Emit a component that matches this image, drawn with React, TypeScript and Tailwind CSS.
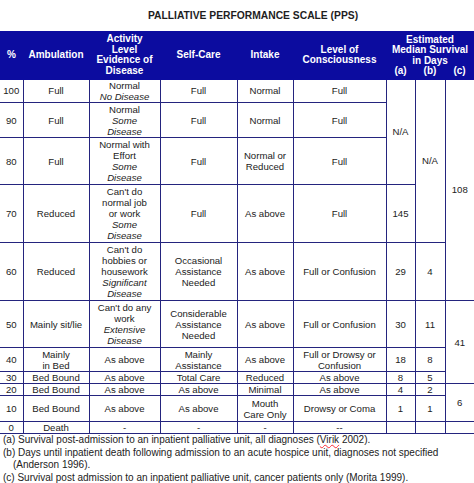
import React from 'react';

// border on right + bottom for every body cell; last column keeps no right edge
const cell = 'border-r border-b border-[#24247e] text-center align-middle p-0';
const last = 'border-b border-[#24247e] text-center align-middle p-0';

const It = ({ children }: { children: React.ReactNode }) => <i>{children}</i>;

const App: React.FC = () => {
  return (
    <div
      className="w-[474px] h-[483px] overflow-hidden bg-white text-[#222]"
      style={{ fontFamily: '"Liberation Sans", Arial, sans-serif' }}
    >
      {/* Title */}
      <div className="h-[31px] pl-[32px] pt-[9px] text-center text-[10.3px] font-bold leading-[13px] text-[#1e1e1e]">
        PALLIATIVE PERFORMANCE SCALE (PPS)
      </div>

      <table className="w-[474px] table-fixed border-collapse text-[9.6px] leading-[11px]">
        <colgroup>
          <col className="w-[23px]" />
          <col className="w-[66px]" />
          <col className="w-[71px]" />
          <col className="w-[77px]" />
          <col className="w-[56px]" />
          <col className="w-[93px]" />
          <col className="w-[29px]" />
          <col className="w-[30px]" />
          <col className="w-[29px]" />
        </colgroup>

        {/* Header */}
        <thead className="bg-[#0c0c9f] text-white font-bold text-[10px] leading-[10.5px]">
          <tr className="h-[35px]">
            <th rowSpan={2} className="p-0 font-bold">%</th>
            <th rowSpan={2} className="p-0 font-bold">Ambulation</th>
            <th rowSpan={2} className="p-0 font-bold">
              Activity<br />Level<br />Evidence of<br />Disease
            </th>
            <th rowSpan={2} className="p-0 font-bold">Self-Care</th>
            <th rowSpan={2} className="p-0 font-bold">Intake</th>
            <th rowSpan={2} className="p-0 font-bold">
              Level of<br />Consciousness
            </th>
            <th colSpan={3} className="p-0 font-bold align-bottom">
              Estimated<br />Median Survival<br />in Days
            </th>
          </tr>
          <tr className="h-[13px]">
            <th className="p-0 pb-[3px] font-bold">(a)</th>
            <th className="p-0 pb-[3px] font-bold">(b)</th>
            <th className="p-0 pb-[3px] font-bold">(c)</th>
          </tr>
        </thead>

        <tbody>
          <tr className="h-[23px]">
            <td className={cell}>100</td>
            <td className={cell}>Full</td>
            <td className={cell}>Normal<br /><It>No Disease</It></td>
            <td className={cell}>Full</td>
            <td className={cell}>Normal</td>
            <td className={cell}>Full</td>
            <td rowSpan={3} className={cell}>N/A</td>
            <td rowSpan={4} className={cell}>N/A</td>
            <td rowSpan={5} className={last}>108</td>
          </tr>
          <tr className="h-[35px]">
            <td className={cell}>90</td>
            <td className={cell}>Full</td>
            <td className={cell}>Normal<br /><It>Some<br />Disease</It></td>
            <td className={cell}>Full</td>
            <td className={cell}>Normal</td>
            <td className={cell}>Full</td>
          </tr>
          <tr className="h-[47px]">
            <td className={cell}>80</td>
            <td className={cell}>Full</td>
            <td className={cell}>Normal with<br />Effort<br /><It>Some<br />Disease</It></td>
            <td className={cell}>Full</td>
            <td className={cell}>Normal or<br />Reduced</td>
            <td className={cell}>Full</td>
          </tr>
          <tr className="h-[58px]">
            <td className={cell}>70</td>
            <td className={cell}>Reduced</td>
            <td className={cell}>Can't do<br />normal job<br />or work<br /><It>Some<br />Disease</It></td>
            <td className={cell}>Full</td>
            <td className={cell}>As above</td>
            <td className={cell}>Full</td>
            <td className={cell}>145</td>
          </tr>
          <tr className="h-[58px]">
            <td className={cell}>60</td>
            <td className={cell}>Reduced</td>
            <td className={cell}>Can't do<br />hobbies or<br />housework<br /><It>Significant<br />Disease</It></td>
            <td className={cell}>Occasional<br />Assistance<br />Needed</td>
            <td className={cell}>As above</td>
            <td className={cell}>Full or Confusion</td>
            <td className={cell}>29</td>
            <td className={cell}>4</td>
          </tr>
          <tr className="h-[47px]">
            <td className={cell}>50</td>
            <td className={cell}>Mainly sit/lie</td>
            <td className={cell}>Can't do any<br />work<br /><It>Extensive<br />Disease</It></td>
            <td className={cell}>Considerable<br />Assistance<br />Needed</td>
            <td className={cell}>As above</td>
            <td className={cell}>Full or Confusion</td>
            <td className={cell}>30</td>
            <td className={cell}>11</td>
            <td rowSpan={3} className={last}>41</td>
          </tr>
          <tr className="h-[24px]">
            <td className={cell}>40</td>
            <td className={cell}>Mainly<br />in Bed</td>
            <td className={cell}>As above</td>
            <td className={cell}>Mainly<br />Assistance</td>
            <td className={cell}>As above</td>
            <td className={cell}>Full or Drowsy or<br />Confusion</td>
            <td className={cell}>18</td>
            <td className={cell}>8</td>
          </tr>
          <tr className="h-[12px]">
            <td className={cell}>30</td>
            <td className={cell}>Bed Bound</td>
            <td className={cell}>As above</td>
            <td className={cell}>Total Care</td>
            <td className={cell}>Reduced</td>
            <td className={cell}>As above</td>
            <td className={cell}>8</td>
            <td className={cell}>5</td>
          </tr>
          <tr className="h-[12px]">
            <td className={cell}>20</td>
            <td className={cell}>Bed Bound</td>
            <td className={cell}>As above</td>
            <td className={cell}>As above</td>
            <td className={cell}>Minimal</td>
            <td className={cell}>As above</td>
            <td className={cell}>4</td>
            <td className={cell}>2</td>
            <td rowSpan={2} className={last}>6</td>
          </tr>
          <tr className="h-[26px]">
            <td className={cell}>10</td>
            <td className={cell}>Bed Bound</td>
            <td className={cell}>As above</td>
            <td className={cell}>As above</td>
            <td className={cell}>Mouth<br />Care Only</td>
            <td className={cell}>Drowsy or Coma</td>
            <td className={cell}>1</td>
            <td className={cell}>1</td>
          </tr>
          <tr className="h-[12px]">
            <td className={cell}>0</td>
            <td className={cell}>Death</td>
            <td className={cell}>-</td>
            <td className={cell}>-</td>
            <td className={cell}>-</td>
            <td className={cell}>--</td>
            <td className={cell}></td>
            <td className={cell}></td>
            <td className={last}></td>
          </tr>
        </tbody>
      </table>

      {/* Footnotes */}
      <div className="pl-[13px] text-[10px] leading-[12px] text-[#222]">
        <p className="-indent-[10px] mb-px">
          (a) Survival post-admission to an inpatient palliative unit, all diagnoses (
          <span className="underline decoration-wavy decoration-red-500 decoration-1">Virik</span> 2002).
        </p>
        <p className="-indent-[10px] mb-px">
          (b) Days until inpatient death following admission to an acute hospice unit, diagnoses not specified
          (Anderson 1996).
        </p>
        <p className="-indent-[10px]">
          (c) Survival post admission to an inpatient palliative unit, cancer patients only (Morita 1999).
        </p>
      </div>
    </div>
  );
};

export default App;
